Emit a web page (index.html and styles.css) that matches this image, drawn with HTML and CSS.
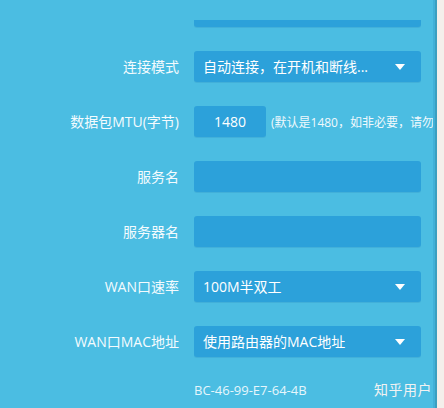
FILE: index.html
```html
<!DOCTYPE html>
<html lang="zh-CN">
<head>
<meta charset="utf-8">
<title>WAN口设置</title>
<link rel="stylesheet" href="styles.css">
</head>
<body>
<div class="page">
  <main class="panel">
    <div class="form">
      <div class="row top-row">
        <span class="label"></span>
        <div class="field thin"></div>
      </div>
      <div class="row">
        <span class="label">连接模式</span>
        <div class="field select"><span class="value">自动连接，在开机和断线...</span><span class="caret"></span></div>
      </div>
      <div class="row">
        <span class="label">数据包MTU(字节)</span>
        <div class="inline">
          <div class="field short"><span class="value center">1480</span></div>
          <span class="hint">(默认是1480，如非必要，请勿修改)</span>
        </div>
      </div>
      <div class="row">
        <span class="label">服务名</span>
        <div class="field"></div>
      </div>
      <div class="row">
        <span class="label">服务器名</span>
        <div class="field"></div>
      </div>
      <div class="row">
        <span class="label">WAN口速率</span>
        <div class="field select"><span class="value">100M半双工</span><span class="caret"></span></div>
      </div>
      <div class="row">
        <span class="label">WAN口MAC地址</span>
        <div class="field select"><span class="value">使用路由器的MAC地址</span><span class="caret"></span></div>
      </div>
      <div class="row mac-row">
        <span class="label"></span>
        <span class="mac">BC-46-99-E7-64-4B</span>
      </div>
    </div>
    <span class="watermark">知乎用户</span>
  </main>
  <div class="divider"></div>
  <aside class="side"></aside>
</div>
</body>
</html>
```
FILE: styles.css
```css
html, body {
  margin: 0;
  padding: 0;
}

body {
  width: 444px;
  height: 408px;
  overflow: hidden;
  font-family: "Open Sans", "Noto Sans CJK SC", sans-serif;
  color: #ffffff;
}

.page {
  display: flex;
  height: 408px;
}

.panel {
  position: relative;
  width: 433px;
  flex: none;
  background: #4bbde2;
  border-right: 2px solid #41b0d8;
  overflow: hidden;
}

.divider {
  width: 2px;
  flex: none;
  background: #3a9fc0;
}

.side {
  flex: 1;
  background: #f4efeb;
}

.form {
  display: grid;
  row-gap: 24px;
  padding-top: 20px;
}

.row {
  display: grid;
  grid-template-columns: 179px 227px;
  column-gap: 15px;
  align-items: center;
  height: 31px;
}

.top-row {
  height: 7px;
}

.label {
  text-align: right;
  font-size: 14px;
  line-height: 31px;
  white-space: nowrap;
  color: #f4fbfe;
}

.field {
  height: 31px;
  border-radius: 3px;
  background: #2ca1da;
  box-shadow: 0 1px 0 rgba(40, 140, 190, 0.25);
  display: flex;
  align-items: center;
  padding: 0 9px;
  box-sizing: border-box;
}

.field.thin {
  height: 7px;
  border-radius: 0 0 3px 3px;
}

.value {
  font-size: 14px;
  line-height: 31px;
  white-space: nowrap;
  color: #ffffff;
}

.value.center {
  flex: 1;
  text-align: center;
}

.select {
  justify-content: space-between;
  padding-right: 16px;
}

.caret {
  width: 0;
  height: 0;
  border-left: 5px solid transparent;
  border-right: 5px solid transparent;
  border-top: 6px solid #ffffff;
}

.inline {
  display: flex;
  align-items: center;
  gap: 5px;
  white-space: nowrap;
}

.field.short {
  width: 72px;
  flex: none;
  padding: 0;
}

.hint {
  font-size: 12px;
  color: #f0f9fd;
}

.mac-row {
  height: 22px;
  margin-top: -2px;
}

.mac {
  font-size: 13px;
  color: #e6f6fc;
}

.watermark {
  position: absolute;
  right: 1px;
  bottom: 9px;
  font-family: "Noto Sans CJK SC", sans-serif;
  font-size: 14px;
  color: #f2f2f2;
  letter-spacing: 0.5px;
}
```
